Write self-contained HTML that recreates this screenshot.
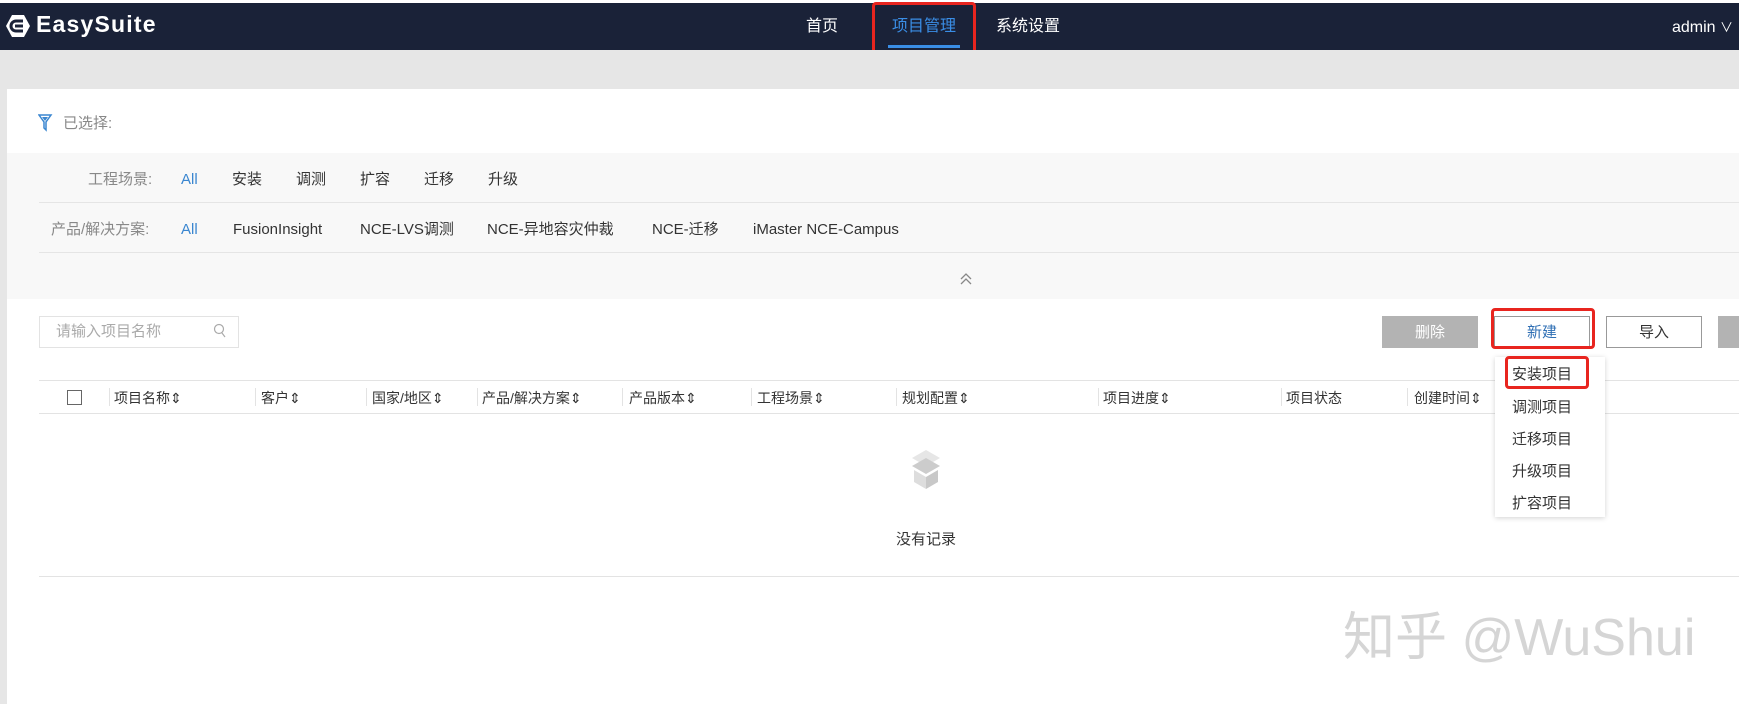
<!DOCTYPE html>
<html><head><meta charset="utf-8"><style>
*{margin:0;padding:0;box-sizing:border-box}
body{width:1739px;height:704px;overflow:hidden;background:#fff;font-family:"Liberation Sans","Noto Sans CJK SC",sans-serif;font-size:15px;color:#333;position:relative}
.a{position:absolute;white-space:nowrap;line-height:22px}
.hdr{position:absolute;left:0;top:3px;width:1739px;height:47px;background:#1a2238}
.nav{color:#fff;font-size:16px;top:16px}
.lbl{color:#888}
.blue{color:#3a86d0}
.th{top:387px;font-size:14px;color:#333}
.sep{position:absolute;top:388px;width:1px;height:18px;background:#e3e3e3}
.btn{position:absolute;top:316px;height:32px;text-align:center;line-height:30px;font-size:15px}
.dd{color:#333;font-size:15px;left:1512px}
.rb{position:absolute;border:3px solid #e8251f;border-radius:4px}
</style></head><body>
<div class="hdr"></div>
<svg class="a" style="left:6px;top:15px" width="24" height="22" viewBox="0 0 24 22"><path d="M6 0h12l6 11-6 11H6L0 11z" fill="#fff"/><path d="M17 6h-7a5 5 0 0 0 0 10h7M9 11h8" stroke="#1a2238" stroke-width="3" fill="none"/></svg>
<div class="a" style="left:36px;top:13px;color:#fff;font-size:23px;font-weight:bold;letter-spacing:1.2px">EasySuite</div>
<div class="a nav" style="left:806px;top:16px">首页</div>
<div class="a nav" style="left:892px;top:16px;color:#3a8ee6">项目管理</div>
<div class="a" style="left:888px;top:45px;width:72px;height:3px;background:#3a8ee6"></div>
<div class="a nav" style="left:996px;top:16px">系统设置</div>
<div class="rb" style="left:872px;top:2px;width:104px;height:54px"></div>
<div class="a nav" style="left:1672px;top:17px">admin <span style="font-size:13px">∨</span></div>
<div class="a" style="left:0;top:50px;width:1739px;height:39px;background:#e6e6e6"></div>
<div class="a" style="left:0;top:89px;width:7px;height:615px;background:#e6e6e6"></div>
<svg class="a" style="left:38px;top:114px" width="16" height="18" viewBox="0 0 16 18"><path d="M1 1h12L8 8v8L6 14V8z" fill="none" stroke="#3a86d0" stroke-width="1.5"/><path d="M4 3h6L7 7z" fill="#3a86d0"/></svg>
<div class="a lbl" style="left:63px;top:113px">已选择:</div>
<div class="a" style="left:7px;top:153px;width:1732px;height:146px;background:#f8f8f8"></div>
<div class="a lbl" style="left:88px;top:169px">工程场景:</div>
<div class="a blue" style="left:181px;top:169px">All</div>
<div class="a" style="left:232px;top:169px">安装</div>
<div class="a" style="left:296px;top:169px">调测</div>
<div class="a" style="left:360px;top:169px">扩容</div>
<div class="a" style="left:424px;top:169px">迁移</div>
<div class="a" style="left:488px;top:169px">升级</div>
<div class="a" style="left:39px;top:202px;width:1700px;height:1px;background:#e5e5e5"></div>
<div class="a lbl" style="left:51px;top:219px">产品/解决方案:</div>
<div class="a blue" style="left:181px;top:219px">All</div>
<div class="a" style="left:233px;top:219px">FusionInsight</div>
<div class="a" style="left:360px;top:219px">NCE-LVS调测</div>
<div class="a" style="left:487px;top:219px">NCE-异地容灾仲裁</div>
<div class="a" style="left:652px;top:219px">NCE-迁移</div>
<div class="a" style="left:753px;top:219px">iMaster NCE-Campus</div>
<div class="a" style="left:39px;top:252px;width:1700px;height:1px;background:#e5e5e5"></div>
<svg class="a" style="left:959px;top:272px" width="14" height="14" viewBox="0 0 14 14"><path d="M2 7l5-5 5 5M2 12l5-5 5 5" fill="none" stroke="#888" stroke-width="1.3"/></svg>
<div class="a" style="left:39px;top:316px;width:200px;height:32px;border:1px solid #e3e3e3"></div>
<div class="a" style="left:56px;top:321px;color:#aaa">请输入项目名称</div>
<svg class="a" style="left:213px;top:323px" width="14" height="16" viewBox="0 0 14 16"><circle cx="6" cy="6" r="4.5" fill="none" stroke="#aaa" stroke-width="1.2"/><path d="M9 10l3 4" stroke="#aaa" stroke-width="1.2"/></svg>
<div class="btn" style="left:1382px;width:96px;background:#b3b3b3;color:#fff;line-height:34px">删除</div>
<div class="btn" style="left:1494px;width:96px;border:1px solid #999;color:#2f6fb4;line-height:32px">新建</div>
<div class="btn" style="left:1606px;width:96px;border:1px solid #999;color:#333;line-height:32px">导入</div>
<div class="btn" style="left:1718px;width:30px;background:#b3b3b3"></div>
<div class="rb" style="left:1491px;top:308px;width:104px;height:41px"></div>
<div class="a" style="left:39px;top:380px;width:1700px;height:1px;background:#e3e3e3"></div>
<div class="a" style="left:39px;top:413px;width:1700px;height:1px;background:#e3e3e3"></div>
<div class="a" style="left:67px;top:390px;width:15px;height:15px;border:1px solid #666"></div>
<div class="sep" style="left:109px"></div><div class="sep" style="left:255px"></div><div class="sep" style="left:366px"></div><div class="sep" style="left:477px"></div><div class="sep" style="left:622px"></div><div class="sep" style="left:751px"></div><div class="sep" style="left:896px"></div><div class="sep" style="left:1098px"></div><div class="sep" style="left:1281px"></div><div class="sep" style="left:1407px"></div>
<div class="a th" style="left:114px">项目名称⇕</div>
<div class="a th" style="left:261px">客户⇕</div>
<div class="a th" style="left:372px">国家/地区⇕</div>
<div class="a th" style="left:482px">产品/解决方案⇕</div>
<div class="a th" style="left:629px">产品版本⇕</div>
<div class="a th" style="left:757px">工程场景⇕</div>
<div class="a th" style="left:902px">规划配置⇕</div>
<div class="a th" style="left:1103px">项目进度⇕</div>
<div class="a th" style="left:1286px">项目状态</div>
<div class="a th" style="left:1414px">创建时间⇕</div>
<div class="a" style="left:1495px;top:357px;width:110px;height:160px;background:#fff;box-shadow:0 1px 5px rgba(0,0,0,.18)"></div>
<div class="a dd" style="top:364px">安装项目</div>
<div class="a dd" style="top:397px">调测项目</div>
<div class="a dd" style="top:429px">迁移项目</div>
<div class="a dd" style="top:461px">升级项目</div>
<div class="a dd" style="top:493px">扩容项目</div>
<div class="rb" style="left:1505px;top:356px;width:84px;height:33px"></div>
<svg class="a" style="left:906px;top:446px" width="40" height="50" viewBox="0 0 40 50"><path d="M20 4l14 8-14 8-14-8z" fill="#e6e6e6"/><path d="M6 20l14 8 14-8-14-8z" fill="#ccc"/><path d="M8 24l12 7v12L8 36z" fill="#ddd"/><path d="M32 24l-12 7v12l12-7z" fill="#c8c8c8"/></svg>
<div class="a" style="left:896px;top:529px">没有记录</div>
<div class="a" style="left:39px;top:576px;width:1700px;height:1px;background:#e3e3e3"></div>
<div class="a" style="left:1343px;top:608px;font-size:52px;line-height:60px;color:#d5d5d5">知乎 @WuShui</div>
</body></html>
